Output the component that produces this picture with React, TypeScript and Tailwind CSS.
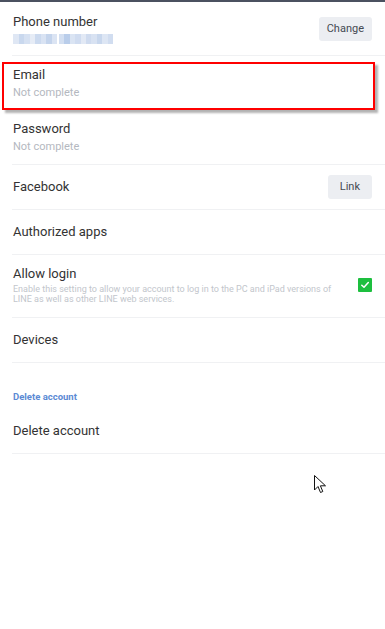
import React from "react";

const blur1 = ["#dfe7f4", "#c9d8ee", "#d6e1f2", "#e6ecf6", "#ccdaef", "#d9e3f3", "#c4d4ec", "#dbe4f3"];
const blur2 = ["#d3dff1", "#b9cdea", "#dae4f3", "#d0dcf0", "#e2e9f5", "#cfdbef", "#d8e2f2", "#c8d7ed", "#dde6f4", "#d1ddf0"];

function Divider() {
  return <div className="ml-3 h-px bg-[#f0f1f3]" />;
}

function Btn({ label }: { label: string }) {
  return (
    <div className="rounded-[3px] bg-[#eceef2] px-[8px] py-[5px] text-[11px] leading-[14px] text-[#454a52]">
      {label}
    </div>
  );
}

export default function App() {
  return (
    <div
      className="relative h-[629px] w-[385px] overflow-hidden bg-white text-[#333]"
      style={{ fontFamily: "Roboto, 'Noto Sans', sans-serif" }}
    >
      <div className="h-[2px] bg-[#4b5160]" />

      {/* Phone number */}
      <div className="flex h-[53px] items-center justify-between pl-[13px] pr-[13px]">
        <div>
          <div className="text-[13px] leading-[18px]">Phone number</div>
          <div className="mt-[3px] flex h-[10px] gap-[2px]">
            <div className="flex">
              {blur1.map((c, i) => (
                <div key={i} className="h-[10px] w-[5.5px]" style={{ background: c }} />
              ))}
            </div>
            <div className="flex">
              {blur2.map((c, i) => (
                <div key={i} className="h-[10px] w-[5.4px]" style={{ background: c }} />
              ))}
            </div>
          </div>
        </div>
        <Btn label="Change" />
      </div>
      <Divider />

      {/* Email */}
      <div className="relative flex h-[54px] items-center pl-[13px] pt-[2px]">
        <div>
          <div className="text-[13px] leading-[18px]">Email</div>
          <div className="text-[11px] leading-[18px] text-[#b4b8c0]">Not complete</div>
        </div>
        <div className="absolute left-[2px] top-[6px] h-[48px] w-[373px] border-2 border-[#ff0000] shadow-[3px_3px_2px_rgba(0,0,0,0.3)]" />
      </div>

      {/* Password */}
      <div className="flex h-[54px] items-center pl-[13px] pt-[2px]">
        <div>
          <div className="text-[13px] leading-[18px]">Password</div>
          <div className="text-[11px] leading-[18px] text-[#b4b8c0]">Not complete</div>
        </div>
      </div>
      <Divider />

      <div className="flex h-[44px] items-center justify-between pl-[13px] pr-[13px]">
        <div className="text-[13px] leading-[18px]">Facebook</div>
        <div className="rounded-[3px] bg-[#eceef2] px-[12px] py-[5px] text-[11px] leading-[14px] text-[#454a52]">Link</div>
      </div>
      <Divider />

      <div className="flex h-[44px] items-center pl-[13px]">
        <div className="text-[13px] leading-[18px]">Authorized apps</div>
      </div>
      <Divider />

      {/* Allow login */}
      <div className="flex h-[62px] items-center justify-between pb-[3px] pl-[13px] pr-[13px]">
        <div className="w-[325px]">
          <div className="text-[13px] leading-[18px]">Allow login</div>
          <div className="mt-[1px] text-[9px] leading-[10px] text-[#c2c6cc]">
            Enable this setting to allow your account to log in to the PC and iPad versions of LINE as well as other LINE web services.
          </div>
        </div>
        <div className="flex h-[14px] w-[14px] items-center justify-center rounded-[1px] bg-[#1dbf3f]">
          <svg width="10" height="10" viewBox="0 0 10 10" fill="none">
            <path d="M1.8 5.2 L4 7.3 L8.3 2.6" stroke="white" strokeWidth="1.5" strokeLinecap="round" strokeLinejoin="round" />
          </svg>
        </div>
      </div>
      <Divider />

      <div className="flex h-[44px] items-center pl-[13px]">
        <div className="text-[13px] leading-[18px]">Devices</div>
      </div>
      <Divider />

      <div className="mb-[6px] pl-[13px] pt-[28px] text-[9.5px] font-bold leading-[12px] text-[#5b8ad4]">Delete account</div>

      <div className="flex h-[44px] items-center pl-[13px]">
        <div className="text-[13px] leading-[18px]">Delete account</div>
      </div>
      <Divider />

      {/* cursor */}
      <svg className="absolute left-[314px] top-[475px]" width="13" height="20" viewBox="0 0 13 20">
        <path
          d="M0.5 0.5 L0.5 15 L4 11.5 L6.5 17.5 L8.8 16.5 L6.4 10.8 L11.5 10.8 Z"
          fill="white"
          stroke="#111"
          strokeWidth="1"
          strokeLinejoin="miter"
        />
      </svg>
    </div>
  );
}
